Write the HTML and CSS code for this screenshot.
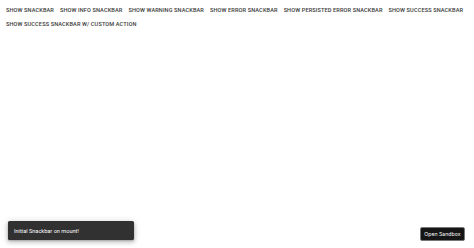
FILE: index.html
```html
<!DOCTYPE html>
<html>
<head>
<meta charset="utf-8">
<link rel="stylesheet" href="styles.css">
</head>
<body>
<div class="buttons">
  <button class="btn">Show snackbar</button>
  <button class="btn">Show info snackbar</button>
  <button class="btn">Show warning snackbar</button>
  <button class="btn">Show error snackbar</button>
  <button class="btn">Show persisted error snackbar</button>
  <button class="btn">Show success snackbar</button>
  <button class="btn">Show success snackbar w/ custom action</button>
</div>
<div class="snackbar">Initial Snackbar on mount!</div>
<button class="sandbox">Open Sandbox</button>
</body>
</html>
```
FILE: styles.css
```css
html, body {
  margin: 0;
  padding: 0;
  background: #fff;
}
body {
  width: 474px;
  height: 248px;
  overflow: hidden;
  font-family: Roboto, "Liberation Sans", sans-serif;
}
.buttons {
  display: flex;
  flex-wrap: wrap;
  padding: 2.5px 3px;
}
.btn {
  font-family: Roboto, "Liberation Sans", sans-serif;
  font-weight: 500;
  font-size: 5.6px;
  letter-spacing: 0.11px;
  text-transform: uppercase;
  color: #3a3a3a;
  background: none;
  border: none;
  padding: 4px 3px;
  line-height: 6.5px;
  min-width: 25px;
  height: 14.4px;
}
.snackbar {
  position: absolute;
  left: 8px;
  bottom: 8px;
  width: 114px;
  height: 19px;
  padding: 0 6px;
  display: flex;
  align-items: center;
  background: #313131;
  color: #fff;
  font-size: 5.6px;
  border-radius: 1.6px;
  box-shadow: 0 1.2px 2px -0.8px rgba(0,0,0,0.2), 0 2.4px 4px 0.4px rgba(0,0,0,0.14), 0 0.4px 7px 0.4px rgba(0,0,0,0.12);
}
.sandbox {
  position: absolute;
  right: 9px;
  bottom: 7px;
  height: 14px;
  padding: 0 3.5px;
  background: #151515;
  color: #fff;
  border: 0.5px solid #777;
  border-radius: 2px;
  font-family: Inter, Roboto, sans-serif;
  font-size: 5.2px;
}
```
